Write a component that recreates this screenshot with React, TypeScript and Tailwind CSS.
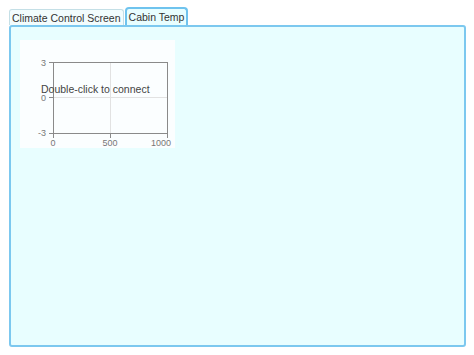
import React from 'react';

function Chart() {
  return (
    <div className="relative w-[155px] h-[108px] bg-[#fbfeff]">
      <svg width="155" height="108" className="absolute left-0 top-0" style={{ fontFamily: '"Liberation Sans", Arial, sans-serif' }}>
        <line x1="90.5" y1="22" x2="90.5" y2="93" stroke="#e2e2e2" />
        <line x1="33" y1="57.5" x2="147" y2="57.5" stroke="#e2e2e2" />
        <rect x="33.5" y="22.5" width="114" height="71" fill="none" stroke="#8a8a8a" />
        <line x1="29" y1="22.5" x2="33" y2="22.5" stroke="#8a8a8a" />
        <line x1="29" y1="57.5" x2="33" y2="57.5" stroke="#8a8a8a" />
        <line x1="29" y1="93.5" x2="33" y2="93.5" stroke="#8a8a8a" />
        <line x1="33.5" y1="94" x2="33.5" y2="98" stroke="#8a8a8a" />
        <line x1="90.5" y1="94" x2="90.5" y2="98" stroke="#8a8a8a" />
        <line x1="147.5" y1="94" x2="147.5" y2="98" stroke="#8a8a8a" />
        <g fill="#777" fontSize="9">
          <text x="26" y="26" textAnchor="end">3</text>
          <text x="26" y="61" textAnchor="end">0</text>
          <text x="26" y="96" textAnchor="end">-3</text>
          <text x="33" y="106" textAnchor="middle">0</text>
          <text x="90" y="106" textAnchor="middle">500</text>
          <text x="141" y="106" textAnchor="middle">1000</text>
        </g>
      </svg>
      <div className="absolute left-[21px] top-[43px] text-[10.5px] leading-[12px] text-[#444] whitespace-nowrap">
        Double-click to connect
      </div>
    </div>
  );
}

export default function App() {
  return (
    <div className="w-[474px] h-[355px] bg-white pt-[8px] pl-[9px] font-['Liberation_Sans',Arial,sans-serif]">
      <div className="flex items-end h-[17px] relative z-10">
        <div className="h-[16px] px-[2px] border border-b-0 border-[#c4dfe6] rounded-t-[3px] bg-[#f2fcfd] text-[10.5px] leading-[16px] text-[#333] mr-[1px]">
          Climate Control Screen
        </div>
        <div className="h-[18px] px-[2px] border-2 border-b-0 border-[#6fc3ee] rounded-t-[4px] bg-[#e8feff] text-[10.5px] leading-[16px] text-[#333]">
          Cabin Temp
        </div>
      </div>
      <div className="w-[457px] h-[322px] border-2 border-[#7cc8ef] rounded-[3px] bg-[#e8feff] pl-[9px] pt-[13px]">
        <Chart />
      </div>
    </div>
  );
}
